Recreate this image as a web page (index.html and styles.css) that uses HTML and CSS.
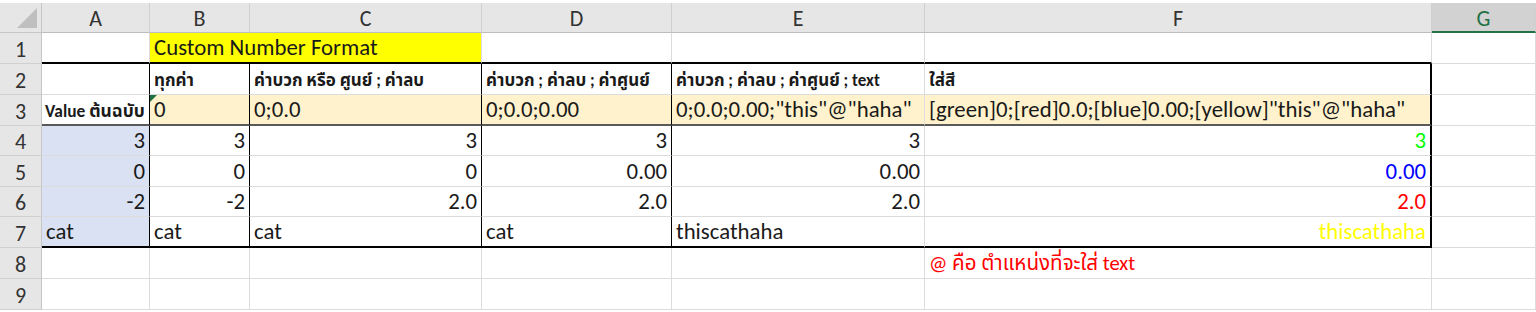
FILE: index.html
```html
<!DOCTYPE html>
<html lang="th">
<head>
<meta charset="utf-8">
<title>Custom Number Format</title>
<link rel="stylesheet" href="styles.css">
</head>
<body>
<div class="sheet">
  <div class="cn"><span class="tri"></span></div>
  <div class="ch">A</div>
  <div class="ch">B</div>
  <div class="ch">C</div>
  <div class="ch">D</div>
  <div class="ch">E</div>
  <div class="ch">F</div>
  <div class="ch sel">G</div>

  <div class="rh">1</div>
  <div class="c bbk"></div>
  <div class="c bbk yellow span2">Custom Number Format</div>
  <div class="c bbk"></div>
  <div class="c bbk"></div>
  <div class="c bbk"></div>
  <div class="c"></div>

  <div class="rh">2</div>
  <div class="c brk"></div>
  <div class="c brk hd">ทุกค่า</div>
  <div class="c brk hd">ค่าบวก หรือ ศูนย์ ; ค่าลบ</div>
  <div class="c brk hd">ค่าบวก ; ค่าลบ ; ค่าศูนย์</div>
  <div class="c hd">ค่าบวก ; ค่าลบ ; ค่าศูนย์ ; text</div>
  <div class="c brk2 hd">ใส่สี</div>
  <div class="c"></div>

  <div class="rh">3</div>
  <div class="c brk bb3 hd lbl">Value ต้นฉบับ</div>
  <div class="c brk bb3 fmt err">0</div>
  <div class="c brk bb3 fmt">0;0.0</div>
  <div class="c brk bb3 fmt">0;0.0;0.00</div>
  <div class="c bb3 fmt">0;0.0;0.00;"this"@"haha"</div>
  <div class="c brk2 bb3 fmt">[green]0;[red]0.0;[blue]0.00;[yellow]"this"@"haha"</div>
  <div class="c"></div>

  <div class="rh">4</div>
  <div class="c brk blue r">3</div>
  <div class="c brk r">3</div>
  <div class="c brk r">3</div>
  <div class="c brk r">3</div>
  <div class="c r">3</div>
  <div class="c brk2 r green">3</div>
  <div class="c"></div>

  <div class="rh">5</div>
  <div class="c brk blue r">0</div>
  <div class="c brk r">0</div>
  <div class="c brk r">0</div>
  <div class="c brk r">0.00</div>
  <div class="c r">0.00</div>
  <div class="c brk2 r bluet">0.00</div>
  <div class="c"></div>

  <div class="rh">6</div>
  <div class="c brk blue r">-2</div>
  <div class="c brk r">-2</div>
  <div class="c brk r">2.0</div>
  <div class="c brk r">2.0</div>
  <div class="c r">2.0</div>
  <div class="c brk2 r red">2.0</div>
  <div class="c"></div>

  <div class="rh">7</div>
  <div class="c brk bb7 blue">cat</div>
  <div class="c brk bb7">cat</div>
  <div class="c brk bb7">cat</div>
  <div class="c brk bb7">cat</div>
  <div class="c bb7">thiscathaha</div>
  <div class="c brk2 bb7 r yel">thiscathaha</div>
  <div class="c"></div>

  <div class="rh">8</div>
  <div class="c"></div>
  <div class="c"></div>
  <div class="c"></div>
  <div class="c"></div>
  <div class="c"></div>
  <div class="c note">@ คือ ตำแหน่งที่จะใส่ text</div>
  <div class="c"></div>

  <div class="rh">9</div>
  <div class="c"></div>
  <div class="c"></div>
  <div class="c"></div>
  <div class="c"></div>
  <div class="c"></div>
  <div class="c"></div>
  <div class="c"></div>
</div>
</body>
</html>
```
FILE: styles.css
```css
* { box-sizing: border-box; }
html, body { margin: 0; padding: 0; background: #fff; overflow: hidden; height: 312px; }
body {
  font-family: "Carlito", "Lato", "Noto Sans Thai", "Tahoma", "Loma", "Garuda", sans-serif;
  color: #1a1a1a;
}
.sheet {
  margin-top: 3px;
  display: grid;
  grid-template-columns: 42px 108px 100px 232px 190px 253px 507px 104px;
  grid-template-rows: 30px 31px 31px 31px 30px 31px 30px 31px 31px 31px;
}
.cn {
  background: #e6e6e6;
  border-right: 1px solid #c6c6c6;
  border-bottom: 1px solid #c6c6c6;
  display: flex;
  align-items: flex-end;
  justify-content: flex-end;
  padding: 0 4px 4px 0;
}
.tri {
  width: 0; height: 0;
  border-left: 20px solid transparent;
  border-bottom: 20px solid #bfbfbf;
}
.ch {
  background: #e6e6e6;
  border-right: 1px solid #d0d0d0;
  border-bottom: 1px solid #bdbdbd;
  display: flex;
  align-items: center;
  justify-content: center;
  font-size: 22px;
  color: #333;
  padding-top: 2px;
}
.ch.sel {
  background: #d2d2d2;
  color: #217346;
  border-bottom: 2px solid #217346;
}
.rh {
  background: #e6e6e6;
  border-right: 1px solid #c6c6c6;
  border-bottom: 1px solid #d0d0d0;
  display: flex;
  align-items: center;
  justify-content: center;
  font-size: 22px;
  color: #333;
  padding-top: 2px;
}
.c {
  position: relative;
  border-right: 1px solid #dcdcdc;
  border-bottom: 1px solid #dcdcdc;
  display: flex;
  align-items: flex-end;
  padding: 0 4px 2px 4px;
  font-size: 22.8px;
  line-height: 26px;
  white-space: nowrap;
  overflow: visible;
}
.span2 { grid-column: span 2; }
.yellow { background: #ffff00; }
.fmt { background: #fff2cc; }
.blue { background: #d9e1f2; }
.r { justify-content: flex-end; }
.hd {
  font-weight: 700;
  font-size: 17px;
  line-height: 20px;
  padding-bottom: 3px;
}
.lbl { font-size: 17.4px; padding-bottom: 3px; padding-left: 3px; }
.bbk { border-bottom: 2px solid #000; }
.brk { border-right: 1px solid #000; }
.brk2 { border-right: 2px solid #000; }
.bb3 { border-bottom: 2px solid #5a5a5a; }
.bb7 { border-bottom: 2px solid #000; }
.green { color: #00ff00; }
.bluet { color: #0000ff; }
.red { color: #ff0000; }
.yel { color: #ffff00; }
.note { color: #ff0000; font-size: 20.6px; line-height: 22px; padding-bottom: 4px; }
.err::before {
  content: "";
  position: absolute;
  left: 0; top: 0;
  width: 0; height: 0;
  border-top: 7px solid #1e7145;
  border-right: 7px solid transparent;
}
```
